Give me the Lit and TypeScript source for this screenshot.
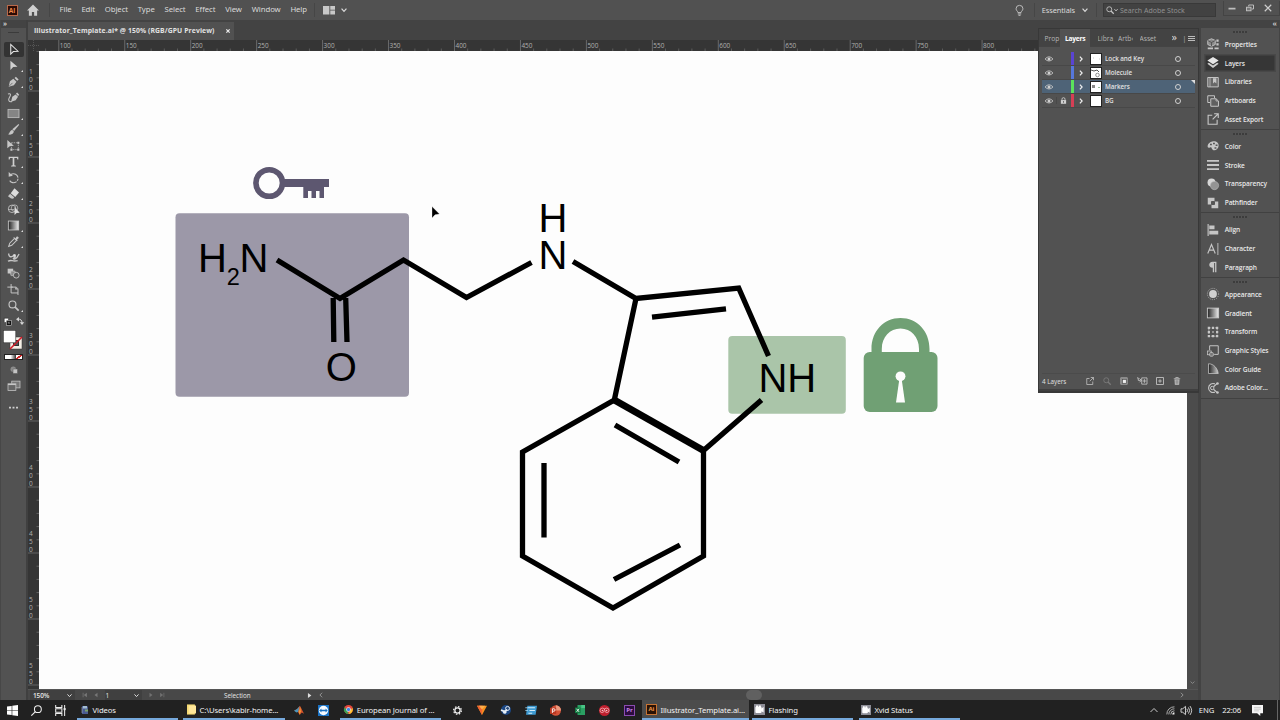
import { LitElement, html, css, svg, TemplateResult } from "lit";
import { customElement, property } from "lit/decorators.js";
import { classMap } from "lit/directives/class-map.js";

const g = "#c6c6c6";

/* Icon artwork, each drawn in a 16 x 16 box */
const ICONS: Record<string, TemplateResult> = {
  select: svg`<path d="M4 .5v14.200l3.800-3.700 6.700-.5z" fill="none" stroke="#e8e8e8" stroke-width="1.500"/>`,
  direct: svg`<path d="M3.500 1v13.500l4-4.200 6.300-.5z" fill="#d0d0d0"/>`,
  pen: svg`<path d="M1 15.500l1.800-8 5-3.600 4.500 4.500-3.700 5z" fill="${g}"/><path d="M9.500 3l2-2 4 4-2 2z" fill="${g}"/><path d="M2 14.500l4.500-4.500" stroke="#505050"/>`,
  curve: svg`<path d="M4.500 14l1.800-7 4.700-3.500 3.600 3.500-3.400 5z" fill="${g}"/><path d="M11.500 2.500l1.800-1.800 3 3.300-1.700 1.800z" fill="${g}"/><path d="M0 3c5-2 4 2 2 5S1 15.500 6 14" fill="none" stroke="${g}" stroke-width="1.500"/>`,
  rect: svg`<rect x="0" y="2" width="16" height="12" fill="#858585" stroke="#bdbdbd" stroke-width="1.200"/>`,
  brush: svg`<path d="M15.300 0l1 1-7.500 9-2.500-2.200z" fill="${g}"/><path d="M6 8.500l2.500 2.500C8 14.500 4.500 16.500 0 15 2.500 14 2.500 10 6 8.500z" fill="${g}"/>`,
  freet: svg`<path d="M-1 0v12l3.500-3 6-.5z" fill="${g}"/><rect x="5" y="4" width="10" height="10" fill="none" stroke="${g}" stroke-dasharray="2 1.200"/><path d="M13.500 2.500h3v3h-3zM13.500 12.500h3v3h-3zM3.500 12.500h3v3h-3z" fill="${g}"/>`,
  type: svg`<path d="M1 1h14v4h-1.400L13 3H9.200v10.500l2.300.5v1.200h-7V14l2.300-.5V3H3l-.6 2H1z" fill="#d0d0d0"/>`,
  rotate: svg`<path d="M3.500 4.500a6.500 6.500 0 1 1-1 8" fill="none" stroke="${g}" stroke-width="1.600" stroke-dasharray="14 1.500 3 1.500"/><path d="M1 0v7l6-1.500z" fill="${g}"/>`,
  eraser: svg`<path d="M9.500 .5l6.500 6-5.500 6.500-6.500-5.500z" fill="#dcdcdc"/><path d="M3 8.500l6 5-1.500 2-3-.3L0 12z" fill="${g}"/>`,
  shape: svg`<circle cx="6" cy="7" r="5.500" fill="none" stroke="${g}" stroke-width="1.200"/><circle cx="9.500" cy="6" r="4.800" fill="none" stroke="${g}"/><path d="M9.500 4.500v11.500l3-3 4.500-.3z" fill="#ddd"/><path d="M0 8h9" stroke="${g}"/>`,
  grad: svg`<rect x=".5" y="1.500" width="15" height="13" fill="url(#gr)" stroke="#c9c9c9" stroke-width="1.200"/>`,
  drop: svg`<path d="M10.500 3.500l2.300-2.800q2.500-.7 2.800 2.200l-2.500 2.600 1 1-1.400 1.500-5.200-5.200L9 1.400z" fill="${g}"/><path d="M8.500 4.500L2.500 10.500l-1.500 4.500L5.500 13.500l6-6" fill="none" stroke="${g}" stroke-width="1.500"/>`,
  puppet: svg`<path d="M1 2c0 5 3 6 6 4s3 3 0 4M8 4c4-1 3 3 1 5s3 3 7-6M0 13.500c5-3 6 1 14-1" fill="none" stroke="${g}" stroke-width="2"/><circle cx="9" cy="5" r="1.500" fill="#ddd"/>`,
  blend: svg`<rect x="-.5" y="1" width="8" height="7" fill="${g}"/><rect x="4" y="4.500" width="6.500" height="6.500" rx="1" fill="#8a8a8a" stroke="${g}"/><circle cx="12" cy="10.500" r="4.200" fill="#555" stroke="${g}" stroke-width="1.300"/>`,
  artb: svg`<path d="M4.500 0v13H14.500M-1 4.500h8M4.500 4.500h7.500l2.500 2.500v9" fill="none" stroke="${g}" stroke-width="1.400"/><path d="M10.500 4.500v3.500h4z" fill="${g}"/>`,
  zoom: svg`<circle cx="6.500" cy="6.500" r="5" fill="none" stroke="${g}" stroke-width="1.700"/><path d="M10 10l5.500 5.500" stroke="${g}" stroke-width="2.400"/>`,
  deflt: svg`<rect x="2" y="2" width="8" height="8" fill="#fff" stroke="#222"/><rect x="7" y="7" width="7" height="7" fill="none" stroke="#111" stroke-width="3"/><rect x="6" y="6" width="9" height="9" fill="none" stroke="#ddd"/>`,
  swap: svg`<path d="M4 4.500q8-1 8 7.500" fill="none" stroke="#d4d4d4" stroke-width="2"/><path d="M6 0v9L0 4.500zM7.500 10.500h9l-4.500 5.500z" fill="#d4d4d4"/>`,
  mode: svg`<circle cx="6.500" cy="6.500" r="5.500" fill="#8b8b8b"/><rect x="6" y="6" width="9" height="9" rx="1" fill="#c4c4c4" stroke="#555"/>`,
  screen: svg`<rect x="5" y="1.500" width="11" height="9" fill="#777" stroke="${g}"/><rect x="0" y="5" width="10.500" height="9" fill="#666" stroke="${g}"/><path d="M0 6h10.500" stroke="${g}" stroke-width="1.500"/>`,
  dots: svg`<path d="M1.500 7h2.800v2.500H1.500zM6.600 7h2.800v2.500H6.600zM11.700 7h2.800v2.500h-2.800z" fill="#d0d0d0"/>`,
  home: svg`<path d="M8 .5L0 8.500h2.500V15.500H6.500v-5h3v5h4V8.500H16z" fill="#d0d0d0"/>`,
  arrange: svg`<path d="M0 2.500h8.500v11.500H0zM9.700 2.500H16v5h-6.300zM9.700 8.700H16V14h-6.300z" fill="#c8c8c8"/>`,
  chev: svg`<path d="M1.500 4.500l6.500 7 6.500-7" fill="none" stroke="#dcdcdc" stroke-width="3.200"/>`,
  chevR: svg`<path d="M5 1.500L11 8l-6 6.500" fill="none" stroke="#f0f0f0" stroke-width="3.200"/>`,
  chevL: svg`<path d="M11 2L5 8l6 6" fill="none" stroke="#a0a0a0" stroke-width="2.300"/>`,
  bulb: svg`<path d="M5.700 11C5.500 9 3 8 3 5.500a5 5 0 0 1 10 0C13 8 10.500 9 10.300 11z" fill="none" stroke="${g}" stroke-width="1.300"/><path d="M5.500 13h5M6.500 15h3" stroke="${g}" stroke-width="1.400"/>`,
  min: svg`<path d="M1 7.500h14v3.500H1z" fill="#bdbdbd"/>`,
  restore: svg`<path d="M5.500 5V2H15v8h-3.500" fill="none" stroke="#bdbdbd" stroke-width="2"/><rect x="1" y="6.500" width="9" height="7" fill="#777" stroke="#bdbdbd" stroke-width="2"/>`,
  close: svg`<path d="M1.500 1.500l13 13M14.500 1.500l-13 13" stroke="#cdcdcd" stroke-width="2.300"/>`,
  closeTab: svg`<path d="M1.500 1.500l13 13M14.500 1.500l-13 13" stroke="#f0f0f0" stroke-width="4.500"/>`,
  props: svg`<path d="M6 1l5 2.300v5.400L6 11 1 8.700V3.300z" fill="#8a8a8a" stroke="${g}" stroke-width="1.200"/><path d="M1 3.300L6 6l5-2.700M6 6v5" fill="none" stroke="#444"/><path d="M12.500 2h3v3h-3zM12.500 7h3v3h-3zM1 12.500h7V15H1zM10 12.500h5.500V15H10z" fill="${g}"/>`,
  layers: svg`<path d="M8 0l7.500 4.700L8 9.500.5 4.700z" fill="#e6e6e6"/><path d="M.5 9l2-1.300L8 11.300l5.500-3.600 2 1.300L8 14.500z" fill="#d0d0d0"/>`,
  libs: svg`<path d="M1 2h14v12.500H1z" fill="#686868" stroke="${g}" stroke-width="1.300"/><path d="M4 2v12.500" stroke="${g}"/><path d="M8 3h4.500v7L10.200 8 8 10z" fill="${g}"/>`,
  artbs: svg`<path d="M4 10H1V1h9v3" fill="none" stroke="${g}" stroke-width="1.300"/><path d="M5 5h7l3.300 3v7H5z" fill="#606060" stroke="${g}" stroke-width="1.300"/><path d="M12 5v3h3" fill="none" stroke="${g}"/>`,
  exp: svg`<path d="M7 3H1.500v12h12V9" fill="none" stroke="${g}" stroke-width="1.500"/><path d="M9.500 1H15v5.500M15 1L7.500 8.500" fill="none" stroke="${g}" stroke-width="1.500"/>`,
  color: svg`<path d="M7 2C12 1 16 4 15.500 8s-4 6.500-7 5.500S7 9 4 10 .5 9 1 7s3-4.500 6-5z" fill="${g}"/><path d="M4 5h2.500v2H4zM8 3.500h2.500v2H8zM11.500 6H14v2h-2.500zM10 9.500h2.500v2H10z" fill="#555"/>`,
  stroke: svg`<path d="M0 2.500h16M0 8h16M0 13.500h16" stroke="${g}" stroke-width="2.600"/>`,
  transp: svg`<circle cx="6" cy="6" r="5.300" fill="#d6d6d6"/><circle cx="10" cy="10" r="5.500" fill="#949494" stroke="#bbb" stroke-width=".8"/>`,
  path: svg`<path d="M1 1h9v9H1z" fill="${g}"/><path d="M6 6h9v9H6z" fill="${g}"/><path d="M6 6h4v4H6z" fill="#555" stroke="#444"/>`,
  align: svg`<path d="M1.500 0v16" stroke="${g}" stroke-width="1.500"/><path d="M3 2h7v5H3zM3 9h12v5H3z" fill="${g}"/>`,
  char: svg`<path d="M1 14L6 2l5 12M2.800 9.500h6.500" fill="none" stroke="${g}" stroke-width="1.500"/><path d="M14.500 0v16" stroke="${g}" stroke-width="1.200"/>`,
  para: svg`<path d="M12.500 1v14h-1.700V2.800H9.500V15H7.700V9C4 9 3 7 3 5s1.500-4 4.500-4z" fill="${g}"/>`,
  appear: svg`<circle cx="8" cy="8" r="7.500" fill="none" stroke="#b0b0b0" stroke-width="1.300" stroke-dasharray="1.300 1.650"/><circle cx="8" cy="8" r="5.200" fill="#d0d0d0"/>`,
  trans: svg`<rect x="2.500" y="2.500" width="11" height="11" fill="none" stroke="${g}" stroke-dasharray="2.500 1.500"/><path d="M1 1h3v3H1zM6.500 1h3v3h-3zM12 1h3v3h-3zM1 6.500h3v3H1zM12 6.500h3v3h-3zM1 12h3v3H1zM6.500 12h3v3h-3zM12 12h3v3h-3zM7 7h2v2H7z" fill="${g}"/>`,
  gstyle: svg`<path d="M3.500 7V1H15v11.500H9.500" fill="none" stroke="${g}" stroke-width="1.300"/><rect x=".7" y="8" width="5" height="5" fill="#555" stroke="${g}"/><rect x="3.500" y="10" width="5" height="5" rx="1.500" fill="#777" stroke="${g}"/>`,
  guide: svg`<path d="M2 1c7 0 12 6 13 13H2z" fill="url(#gr2)" stroke="${g}"/>`,
  acolor: svg`<path d="M10.500 2.500A6 6 0 1 0 10.500 13.500" fill="none" stroke="${g}" stroke-width="1.500"/><circle cx="7" cy="8" r="2.300" fill="none" stroke="${g}" stroke-width="1.300"/><path d="M8.700 6.300L14 1.500M8.700 9.700L14 14.500" stroke="${g}" stroke-width="1.500"/><circle cx="14" cy="2" r="1.700" fill="${g}"/><circle cx="14" cy="14" r="1.700" fill="${g}"/>`,
  eye: svg`<path d="M0 8q8-9 16 0-8 8-16 0z" fill="none" stroke="#c4c4c4" stroke-width="1.700"/><circle cx="8" cy="8" r="3" fill="#d0d0d0"/>`,
  lock: svg`<path d="M4.500 7V5a3.500 3.500 0 0 1 7 0v2" fill="none" stroke="#d0d0d0" stroke-width="1.900"/><rect x="2" y="7" width="12" height="8.500" fill="#d0d0d0"/><path d="M7.200 9h1.600v4H7.200z" fill="#444"/>`,
  mask: svg`<rect x="1.500" y="1.500" width="13" height="13" fill="#8a8a8a" stroke="#b4b4b4"/><rect x="5" y="5" width="7.500" height="7.500" fill="#eee" stroke="#444" stroke-width="1.200"/>`,
  sub: svg`<path d="M0 3h2v4h4M4 4l3 3-3 3" fill="none" stroke="${g}" stroke-width="1.400"/><path d="M7.500 3H16v10H7.500zM11.800 5v6M9 8h6" fill="none" stroke="${g}" stroke-width="1.300"/>`,
  plus: svg`<path d="M1 1h14v14H1zM8 4.500v7M4.500 8h7" fill="none" stroke="${g}" stroke-width="1.700"/>`,
  trash: svg`<path d="M1.500 3.500h13M5.500 3V1h5v2" fill="none" stroke="${g}" stroke-width="1.500"/><path d="M3 5h10l-.7 10.500H3.700z" fill="${g}"/><path d="M6 6.500v7M8 6.500v7M10 6.500v7" stroke="#555"/>`,
  first: svg`<path d="M3 2v12" stroke="#777" stroke-width="2"/><path d="M13 2v12L5 8z" fill="#777"/>`,
  prev: svg`<path d="M12 2v12L4 8z" fill="#777"/>`,
  next: svg`<path d="M4 2v12l8-6z" fill="#707070"/>`,
  last: svg`<path d="M13 2v12" stroke="#707070" stroke-width="2"/><path d="M3 2v12l8-6z" fill="#707070"/>`,
  play: svg`<path d="M3 0v16l11-8z" fill="#dedede"/>`,
  win: svg`<path d="M0 2.300l6.800-1v6.200H0zM7.700 1.200L16 0v7.500H7.700zM0 8.500h6.800v6.200L0 13.700zM7.700 8.500H16V16l-8.300-1.200z" fill="#fff"/>`,
  find: svg`<circle cx="10" cy="6" r="5" fill="none" stroke="#f0f0f0" stroke-width="1.500"/><path d="M6.500 9.500L.5 15.500" stroke="#f0f0f0" stroke-width="1.600"/>`,
  view: svg`<path d="M1 0v3.500h9V0M1 16v-3.500h9V16M1 5.500h9v5H1zM14 0v16" fill="none" stroke="#eee" stroke-width="1.500"/><path d="M12.500 4.500h3v3h-3z" fill="#eee"/>`,
  videos: svg`<path d="M2 0h10l2 2v14H2z" fill="#4b5b91"/><path d="M4 0h8v5H4z" fill="#a3bdd2"/><path d="M8 7h6v4H8z" fill="#7da469"/><path d="M1 3h2v2H1zM1 7h2v2H1zM1 11h2v2H1z" fill="#b8c5dc"/>`,
  folder: svg`<path d="M0-1h14v18H0z" fill="#f5d973"/><path d="M3 1h13v14H3z" fill="#ffe79a"/>`,
  matlab: svg`<path d="M0 9l5-2.500L9.500 1 12 6l4 8-3.500-2-3.500 4-2.500-5z" fill="#d6552d"/><path d="M0 9l5-2.500L9 2 6.500 11 4 12z" fill="#4a95ba"/><path d="M10 3l1 7-2 5-1.500-4z" fill="#f19b36"/>`,
  team: svg`<rect width="16" height="16" fill="#1973c6"/><circle cx="8" cy="8" r="6.800" fill="#f5faff"/><path d="M1.800 8L5 5v2h6V5l3.200 3L11 11V9H5v2z" fill="#1870c0"/>`,
  chrome: svg`<circle cx="8" cy="8" r="8" fill="#e4463a"/><path d="M1 4l5 6 2 6A8 8 0 0 1 1 4z" fill="#34a353"/><path d="M8 16l3-6 4-5a8 8 0 0 1-7 11z" fill="#fbc72e"/><circle cx="8" cy="8" r="4" fill="#fff"/><circle cx="8" cy="8" r="3" fill="#4285e8"/>`,
  gear: svg`<circle cx="8" cy="8" r="4.700" fill="none" stroke="#f2f2f2" stroke-width="2.200"/><circle cx="8" cy="8" r="6.900" fill="none" stroke="#f2f2f2" stroke-width="2.200" stroke-dasharray="2.710 2.710"/>`,
  tri: svg`<path d="M0 1h16L8 16z" fill="#f7931e"/><path d="M0 1h9l-1 15z" fill="#ef6230"/><path d="M3 1h10l-5 6z" fill="#ffb04d"/>`,
  steam: svg`<circle cx="8" cy="8" r="8" fill="#1b4682"/><circle cx="10.500" cy="5.500" r="3.200" fill="#284b7c" stroke="#e6eef5" stroke-width="1.500"/><path d="M0 8l6 2.500 4-3" stroke="#e6eef5" stroke-width="3" fill="none"/><circle cx="6" cy="11.500" r="2.600" fill="#e6eef5"/>`,
  blue: svg`<path d="M2 1h14l-2 13H0z" fill="#3d9ad2"/><path d="M3 4h10M5 8h8M3.500 12H9" stroke="#d4edfa" stroke-width="1.600"/><path d="M-1 4h4M-1 8h4" stroke="#9bd2ee" stroke-width="1.200"/>`,
  ppt: svg`<circle cx="8.500" cy="8" r="7.500" fill="#d35238"/><path d="M8.500.5A7.500 7.500 0 0 1 16 8H8.500z" fill="#ef9b7f"/><rect y="4" width="9" height="9" fill="#b93721"/><path d="M3.500 11.500V5.500h2.200a1.700 1.700 0 0 1 0 3.500H4" fill="none" stroke="#fff" stroke-width="1.300"/>`,
  xls: svg`<rect x="4" y="0" width="12" height="16" fill="#2a9f62"/><path d="M10 0h6v5h-6z" fill="#49c586"/><rect y="4" width="9" height="9" fill="#137a42"/><path d="M2.500 6l4 5M6.500 6l-4 5" stroke="#fff" stroke-width="1.300"/>`,
  red: svg`<circle cx="8" cy="8" r="8" fill="#bf1f2e"/><path d="M1.500 8a3.500 3.500 0 1 1 7 0 3 3 0 1 0 6 0 3.500 3.500 0 1 0-7 0 3 3 0 1 1-6 0z" fill="none" stroke="#f4b6bb" stroke-width="1.100"/><circle cx="5" cy="8" r="1.200" fill="#f4c6ca"/><circle cx="11" cy="8" r="1.200" fill="#f4c6ca"/>`,
  cam: svg`<rect width="16" height="16" fill="#8d8d96"/><rect x="2" y="4" width="9" height="9" rx="1.500" fill="#fff"/><path d="M10 7l4-2.500v8L10 10zM3 2h3v3H3zM7 2h3v3H7z" fill="#fff"/>`,
  caret: svg`<path d="M1 12l7-7 7 7" fill="none" stroke="#e6e6e6" stroke-width="1.700"/>`,
  wifi: svg`<path d="M1.500 15A13 13 0 0 1 15 1.500M5 15A10 10 0 0 1 15 5M8.500 15A6.500 6.500 0 0 1 15 8.500" fill="none" stroke="#c9c9c9" stroke-width="1.500"/><path d="M11 15a4 4 0 0 1 4-4v4z" fill="#eee"/>`,
  sound: svg`<path d="M0 5.500h2.500L6.500 2v12l-4-3.500H0z" fill="none" stroke="#eee" stroke-width="1.200"/><path d="M8.500 5.500q2 2.500 0 5M10.800 3.500q3.500 4.500 0 9M13 1.500q5 6.500 0 13" fill="none" stroke="#eee" stroke-width="1.200"/>`,
  note: svg`<path d="M0 0h16v12h-4v4l-4.500-4H0z" fill="#f5f5f5"/><path d="M3 3.500h10M3 6h10M3 8.500h7" stroke="#bdbdbd"/>`,
};

const icon = (name: string, size = 12, cls = "") => html`<svg class="ic ${cls}" width=${size} height=${size} viewBox="0 0 16 16">
  <defs>
    <linearGradient id="gr"><stop offset="0" stop-color="#222" /><stop offset="1" stop-color="#eee" /></linearGradient>
    <linearGradient id="gr2"><stop offset="0" stop-color="#222" /><stop offset="1" stop-color="#ccc" /></linearGradient>
  </defs>${ICONS[name]}</svg>`;

const base = css`
  * { box-sizing: border-box; }
  .ic { display: block; flex: none; overflow: visible; }
`;

@customElement("menu-bar")
class MenuBar extends LitElement {
  static styles = [base, css`
    :host { display: flex; height: 20px; align-items: center; background: #515151; color: #dadada; font: 8px "Noto Sans", sans-serif; flex: none; white-space: nowrap; }
    .ai { width: 11px; height: 11px; margin: 0 9px 0 6.500px; border: 1px solid #b9694a; background: #2b0b05; color: #f08a4b; font: bold 6.500px/9px "Open Sans", sans-serif; text-align: center; flex: none; }
    .sep { width: 1px; height: 14px; background: #464646; }
    .seph { margin-left: 10px; }
    .menus { display: flex; gap: 9.750px; margin: 0 7px 0 10px; font-size: 7.750px; letter-spacing: -0.070px; line-height: 17px; height: 19px; }
    .sep2 { margin-right: 8px; }
    .arr { margin-right: 6px; }
    .grow { flex: 1; }
    .bulb { margin-right: 9px; }
    .ess { margin: 0 7px 1px 7px; font-size: 7.400px; letter-spacing: -0.080px; }
    .sep3 { margin: 0 6px 0 8px; }
    .search { display: flex; align-items: center; width: 113px; height: 14px; background: #424242; border: 1px solid #393939; padding-left: 2px; color: #919191; font-size: 7px; }
    .search .c { margin: 0 2px 0 0; }
    .wins { display: flex; align-items: center; gap: 10px; height: 15px; margin: -4px 0 0 7px; padding: 0 7px 0 4px; border: 1px solid #444; border-top: 0; width: 57px; }
  `];
  render() {
    return html`
      <div class="ai">Ai</div>${icon("home", 12)}
      <div class="sep seph"></div>
      <div class="menus">${["File", "Edit", "Object", "Type", "Select", "Effect", "View", "Window", "Help"].map((m) => html`<span>${m}</span>`)}</div>
      <div class="sep sep2"></div>${icon("arrange", 12, "arr")}${icon("chev", 6)}
      <div class="grow"></div>
      ${icon("bulb", 11, "bulb")}<div class="sep"></div><span class="ess">Essentials</span>${icon("chev", 6)}
      <div class="sep sep3"></div>
      <div class="search">${icon("zoom", 8)}${icon("chev", 4, "c")}<span>Search Adobe Stock</span></div>
      <div class="wins">${icon("min", 8)}${icon("restore", 8)}${icon("close", 8)}</div>`;
  }
}

@customElement("tool-bar")
class ToolBar extends LitElement {
  static styles = [base, css`
    :host { display: flex; flex-direction: column; width: 28px; background: #525252; border-right: 2px solid #404040; border-left: 1px solid #474747; flex: none; }
    .head { height: 8px; background: #434343; color: #ccc; font: bold 7px/8px "Open Sans", sans-serif; padding-left: 2px; letter-spacing: -1px; }
    .grip { height: 14px; display: flex; justify-content: center; padding-top: 4px; }
    .grip i { width: 11px; height: 1px; background: #3b3b3b; }
    .tool { height: 16px; width: 20px; margin-left: 2.500px; display: flex; align-items: center; justify-content: center; position: relative; }
    .tool.on { background: #333; border-radius: 2px; height: 15px; }
    .tool.more::after { content: ""; position: absolute; right: 1px; bottom: 1px; border: 1px solid #ddd; border-top-color: transparent; border-left-color: transparent; }
    .mini { display: flex; justify-content: space-between; padding: 4px 2px 0 2px; height: 16px; }
    .fs { width: 20px; height: 20px; margin: 1px 0 4px 2px; }
    .strk { display: block; }
    .modes { display: flex; width: 19px; height: 6px; margin: 0 0 5px 3px; border: 0.500px solid #222; }
    .modes i { flex: 1; background: #fff; }
    .modes i:nth-child(2) { background: linear-gradient(90deg, #eee, #333); }
    .modes i:nth-child(3) { background: linear-gradient(145deg, #fff 35%, #c22 40%, #c22 60%, #fff 65%); }
    .m2 { margin-bottom: 5px; height: 10px; }
    .m3 { margin-bottom: 6px; height: 12px; }
    .m4 { height: 18px; }
  `];
  render() {
    const tools = ["select", "direct+", "pen+", "curve", "rect+", "brush+", "freet", "type+", "rotate+", "eraser+", "shape", "grad+", "drop+", "puppet", "blend", "artb", "zoom+"];
    return html`<div class="head">››</div><div class="grip"><i></i></div>
      ${tools.map((t, i) => html`<div class=${classMap({ tool: true, on: i === 0, more: t.endsWith("+") })}>${icon(t.replace("+", ""), 11)}</div>`)}
      <div class="mini">${icon("deflt", 9)}${icon("swap", 8)}</div>
      <div class="fs"><svg class="strk" width="20" height="20" viewBox="0 0 20 20">
        <rect x="7" y="7" width="12" height="12" fill="#f4efe6" stroke="#333" stroke-width=".5" /><rect x="10.500" y="10.500" width="5" height="5" fill="#555" stroke="#333" />
        <path d="M7 19L19 7" stroke="#d21c28" stroke-width="1.600" /><rect x=".3" y=".3" width="12.500" height="12.500" fill="#fff" stroke="#333" stroke-width=".6" /></svg></div>
      <div class="modes"><i></i><i></i><i></i></div>
      <div class="tool m2">${icon("mode", 8)}</div>
      <div class="tool m3">${icon("screen", 12)}</div>
      <div class="tool m4">${icon("dots", 11)}</div>`;
  }
}

@customElement("ruler-top")
class RulerTop extends LitElement {
  static styles = css`:host { display: block; height: 11px; background: #353535; } svg { display: block; } text { font: 6.400px "Open Sans", sans-serif; fill: #b0b0b0; }`;
  render() {
    const n = Array.from({ length: 90 }, (_, i) => i);
    return html`<svg width="1170" height="11" viewBox="28 40 1170 11">
      <path d="M28 45.500H39M33.500 40V51" stroke="#555" stroke-dasharray="1 1" />
      ${n.map((i) => { const x = 45.600 + i * 13.190; return svg`<path d="M${x} ${(i - 1) % 5 === 0 ? 40 : 48.500}V51" stroke="${(i - 1) % 5 === 0 ? "#777" : "#666"}" stroke-width=".8"/>`; })}
      ${Array.from({ length: 15 }, (_, i) => svg`<text x=${59.800 + i * 65.950} y="47.600">${100 + i * 50}</text>`)}
    </svg>`;
  }
}

@customElement("ruler-left")
class RulerLeft extends LitElement {
  static styles = css`:host { display: block; width: 11px; background: #353535; overflow: hidden; flex: none; } svg { display: block; } text { font: 6.500px "Open Sans", sans-serif; fill: #b0b0b0; }`;
  render() {
    return html`<svg width="11" height="638" viewBox="28 51 11 638">
      ${Array.from({ length: 49 }, (_, i) => { const y = 51.400 + i * 13.200; const M = (i - 3) % 5 === 0; return svg`<path d="M${M ? 28 : 36.500} ${y}H39" stroke="#707070" stroke-width=".8"/>`; })}
      ${Array.from({ length: 10 }, (_, i) => String(100 + i * 50).split("").map((d, k) => svg`<text x="29" y=${73.600 + i * 66 + k * 8}>${d}</text>`))}
    </svg>`;
  }
}

@customElement("art-board")
class ArtBoard extends LitElement {
  static styles = css`
    :host { display: block; background: #fdfdfd; flex: none; width: 1148px; }
    svg { display: block; }
    .atom { font: 40px "Liberation Sans", sans-serif; fill: #000; }
    .sub { font-size: 23.500px; }
    .bond { fill: none; stroke: #000; stroke-width: 5.300; }
    .wide { stroke-width: 7; }
    .key { fill: #5d5770; }
    .ring { fill: none; stroke: #5d5770; stroke-width: 5.600; }
    .green { fill: #70a074; }
  `;
  render() {
    return html`<svg width="1148" height="638" viewBox="39 51 1148 638">
      <rect x="175.500" y="213.200" width="233.500" height="183.500" rx="4" fill="#9c98a8" />
      <rect x="728.300" y="336" width="117.500" height="77.800" rx="4" fill="#aac5a9" />
      <circle class="ring" cx="269.200" cy="183" r="13.300" />
      <path class="key" d="M284 179H329V187H324V198H319.500V191H316V198H311.500V191H308V198H303.300V187H284z" />
      <path class="green" d="M871.500 353V349C871.500 331 884 318 900.500 318S929.500 331 929.500 349V353H919V349C919 337 911 328.600 900.500 328.600S881.800 337 881.800 349V353z" />
      <rect class="green" x="863.700" y="352" width="73.800" height="60" rx="6" />
      <circle cx="900.500" cy="376.300" r="4.900" fill="#fdfdfd" /><path d="M899.500 378h2L905 402.600H896z" fill="#fdfdfd" />
      <path class="bond" d="M277 260L340 298.500L403.500 260L466.500 297.500L531.500 262.500M573 261.500L636 298.500L738.700 288L768.500 356M652 317.200L726 308.800M636 298.500L614.300 400L522.500 452V556L613 608L703.500 556V450.500L761.500 400M544 463V537.500M615 425L679 462M614 579.500L680 545M333.200 298L333.800 342M345.700 298L347 342" />
      <path class="bond wide" d="M614.300 400L703.500 450.500" />
      <text class="atom" x="198" y="272.400">H</text><text class="atom sub" x="226.800" y="285.200">2</text><text class="atom" x="239.600" y="272.400">N</text>
      <text class="atom" x="325.800" y="380.600">O</text>
      <text class="atom" x="538.500" y="231.700">H</text><text class="atom" x="538.500" y="269.100">N</text>
      <text class="atom" x="758.400" y="391.700">NH</text>
      <path d="M432 206.500V218l3-3.200 4.500-.8z" fill="#000" stroke="#fff" stroke-width=".3" />
    </svg>`;
  }
}

@customElement("layers-panel")
class LayersPanel extends LitElement {
  static styles = [base, css`
    :host { display: flex; flex-direction: column; width: 161px; height: 365px; background: #525252; border: 1px solid #383838; border-bottom-width: 2px; color: #e0e0e0; font: 600 6.300px "Open Sans", sans-serif; white-space: nowrap; }
    .tabs { display: flex; height: 18px; background: #434343; line-height: 19px; color: #b5b5b5; font-size: 6.700px; font-weight: 400; border-bottom: 1px solid #444; }
    .tabs span { overflow: hidden; height: 18px; }
    .tabs .t0 { width: 22px; padding-left: 5.500px; }
    .tabs .t1 { width: 30px; padding-left: 5px; background: #525252; color: #fff; font-weight: 700; margin: 0 7.500px 0 -1px; letter-spacing: -0.250px; }
    .tabs .t2 { width: 18.500px; margin-right: 2px; } .tabs .t3 { width: 15px; margin-right: 6.500px; } .tabs .t4 { width: 24px; }
    .tabs .tt { font-size: 11px; line-height: 16px; margin-left: 8px; width: 11px; color: #ddd; }
    .tabs .pipe { width: 5px; font-size: 7px; }
    .ham { width: 7px; height: 5px; margin-top: 7px; border: solid #bbb; border-width: 1px 0; background: linear-gradient(#bbb, #bbb) 0 1px / 100% 1px no-repeat; }
    .list { margin: 5px 3px 0 3px; flex: 1; border: solid #4b4b4b; border-width: 0 0 1px; }
    .row { display: flex; align-items: center; height: 14px; border-bottom: 1px solid #484848; position: relative; }
    .row.sel { background: #4e6377; }
    .row.sel::after { content: ""; position: absolute; right: 0; top: 0; border: 2px solid transparent; border-top-color: #ddd; border-right-color: #ddd; }
    .e { width: 14px; display: flex; justify-content: center; } .k { width: 15px; display: flex; justify-content: flex-start; padding-left: 3px; border-left: 1px solid #484848; }
    .bar { width: 3px; height: 13px; margin-right: 3.500px; }
    .th { width: 12px; height: 12px; background: #fff; border: 1px solid #222; margin: 0 3px 0 6.500px; display: block; }
    .nm { flex: 1; letter-spacing: -0.070px; } .circ { width: 6px; height: 6px; border: 1px solid #d0d0d0; border-radius: 50%; margin-right: 14px; }
    .foot { height: 14px; display: flex; align-items: center; padding-left: 3px; font-size: 6.300px; font-weight: 400; margin-bottom: 1px; }
    .foot span { width: 43.500px; } .foot .ic { margin-right: 9.100px; } .foot .dim { opacity: 0.350; }
    .edge { height: 2px; background: #404040; }
  `];
  render() {
    const rows: [string, string, TemplateResult][] = [
      ["Lock and Key", "#5a44d2", svg`<path d="M2 4h1M8 5h1" stroke="#ccc" />`],
      ["Molecule", "#5677dc", svg`<path d="M0 2l3 1 3-1 2 2" stroke="#555" fill="none"/><circle cx="6.500" cy="7" r="1.800" fill="none" stroke="#777" stroke-width=".8"/>`],
      ["Markers", "#5be45c", svg`<path d="M1 3h3v3H1z" fill="#888"/><path d="M7 5h2v1H7z" fill="#9b9"/>`],
      ["BG", "#d63f55", svg``]];
    return html`<div class="tabs"><span class="t0">Prop</span><span class="t1">Layers</span><span class="t2">Libra</span><span class="t3">Artb‹</span><span class="t4">Asset</span><span class="tt">»</span><span class="pipe">|</span><i class="ham"></i></div>
      <div class="list">${rows.map(([n, c, t], i) => html`<div class=${classMap({ row: true, sel: i === 2 })}>
        <div class="e">${icon("eye", 8)}</div><div class="k">${i === 3 ? icon("lock", 7) : ""}</div><div class="bar" style="background:${c}"></div>${icon("chevR", 6)}
        <svg class="th" viewBox="0 0 10 10">${t}</svg><div class="nm">${n}</div><div class="circ"></div></div>`)}</div>
      <div class="foot"><span>4 Layers</span>${icon("exp", 8)}${icon("zoom", 8, "dim")}${icon("mask", 8)}${icon("sub", 10)}${icon("plus", 8)}${icon("trash", 8)}</div>
      <div class="edge"></div>`;
  }
}

@customElement("side-dock")
class SideDock extends LitElement {
  static styles = [base, css`
    :host { display: flex; flex-direction: column; width: 82px; background: #525252; border-left: 3px solid #434343; border-right: 1px solid #444; color: #e8e8e8; font: 600 6.600px "Open Sans", sans-serif; flex: none; white-space: nowrap; }
    .head { height: 8px; background: #434343; color: #ccc; font: bold 7px/7px "Open Sans", sans-serif; text-align: right; padding-right: 3px; letter-spacing: -0.800px; }
    .grp { padding: 7.100px 3px 0.500px; border-bottom: 1px solid #414141; }
    .grp::before { content: ""; display: block; height: 1.500px; width: 14px; margin: -4px auto 2.500px; background: repeating-linear-gradient(90deg, #3c3c3c 0 2px, #555 2px 3px); }
    .it { display: flex; align-items: center; height: 18.700px; gap: 5.700px; padding-left: 3px; letter-spacing: -0.100px; }
    .it.on { background: #363636; box-shadow: inset 0 0 0 1.500px #484848; }
  `];
  render() {
    const groups = [
      [["props", "Properties"], ["layers", "Layers"], ["libs", "Libraries"], ["artbs", "Artboards"], ["exp", "Asset Export"]],
      [["color", "Color"], ["stroke", "Stroke"], ["transp", "Transparency"], ["path", "Pathfinder"]],
      [["align", "Align"], ["char", "Character"], ["para", "Paragraph"]],
      [["appear", "Appearance"], ["grad", "Gradient"], ["trans", "Transform"], ["gstyle", "Graphic Styles"], ["guide", "Color Guide"], ["acolor", "Adobe Color..."]]];
    return html`<div class="head">‹‹</div>${groups.map((gr) => html`<div class="grp">${gr.map(([i, n]) => html`<div class=${classMap({ it: true, on: n === "Layers" })}>${icon(i, 12)}<span>${n}</span></div>`)}</div>`)}`;
  }
}

@customElement("task-bar")
class TaskBar extends LitElement {
  static styles = [base, css`
    :host { display: flex; height: 20px; background: #212121; color: #f2f2f2; font: 7.700px "Noto Sans", sans-serif; flex: none; white-space: nowrap; }
    .start { display: flex; width: 72px; }
    .b { display: flex; align-items: center; justify-content: center; width: 24.650px; flex: none; }
    .start .b { width: 24px; }
    .app { display: flex; align-items: center; flex: none; border-bottom: 2px solid #76a9dc; gap: 3.500px; padding-left: 4px; padding-top: 1px; letter-spacing: -0.100px; }
    .app.on { background: #4c4c4c; }
    .app.near { padding-left: 2px; }
    .gap1 { width: 1.500px; } .gap4 { width: 3.500px; }
    .sq { width: 11px; height: 11px; font: 700 6px/9px "Open Sans", sans-serif; text-align: center; flex: none; }
    .ai { border: 1px solid #c77434; background: #2a1205; color: #f29a4a; } .pr { border: 1px solid #8a4bb0; background: #2d0b40; color: #c98ae8; }
    .grow { flex: 1; } .lang { margin: 0 8px 0 7px; line-height: 20px; } .clock { line-height: 20px; margin-right: 11px; letter-spacing: -0.200px; }
    .tray { align-self: center; margin-right: 8px; } .tray.w { margin-right: 6px; } .tray.s { margin-right: 0; } .tray.n { margin: 0; }
    .end { width: 1px; background: #666; margin: 0 2px 0 14px; }
  `];
  render() {
    const app = (ic: TemplateResult, t: string, w: number, ml: number, cls = "") => html`<div class="app ${cls}" style="width:${w}px;margin-left:${ml}px">${ic}<span>${t}</span></div>`;
    const b = (n: string, s = 11) => html`<div class="b">${icon(n, s)}</div>`;
    return html`<div class="start">${b("win", 11)}${b("find", 11)}${b("view", 11)}</div>
      ${app(icon("videos", 8), "Videos", 101, 5)}
      ${app(icon("folder", 9), "C:\\Users\\kabir-home...", 102, 5)}
      <div class="gap1"></div>${b("matlab", 10)}${b("team", 11)}
      ${app(icon("chrome", 9), "European Journal of ...", 101, 4.500)}
      <div class="gap4"></div>${b("gear", 9)}${b("tri", 10)}${b("steam", 10)}${b("blue", 11)}${b("ppt", 11)}${b("xls", 10)}${b("red", 11)}
      <div class="b"><div class="sq pr">Pr</div></div>
      ${app(html`<div class="sq ai">Ai</div>`, "Illustrator_Template.ai...", 107, 0, "on")}
      ${app(icon("cam", 11), "Flashing", 101, 3, "near")}
      ${app(icon("cam", 10), "Xvid Status", 101, 6, "near")}
      <div class="grow"></div>
      ${icon("caret", 8, "tray")}${icon("wifi", 9, "tray w")}${icon("sound", 11, "tray s")}
      <span class="lang">ENG</span><span class="clock">22:06</span>${icon("note", 11, "tray n")}<div class="end"></div>`;
  }
}

@customElement("app-root")
class AppRoot extends LitElement {
  @property() zoom = "150%";
  static styles = [base, css`
    :host { display: flex; flex-direction: column; width: 1280px; height: 720px; overflow: hidden; background: #434343; }
    .body { display: flex; height: 680px; }
    .doc { display: flex; flex-direction: column; width: 1170px; position: relative; }
    .tabs { height: 20px; padding-top: 2px; display: flex; background: #434343; }
    .tab { width: 206px; height: 18px; background: #515151; display: flex; align-items: center; color: #e2e2e2; font: 700 6.800px "Open Sans", sans-serif; padding: 0 4px 1px 6px; justify-content: space-between; white-space: nowrap; letter-spacing: 0.110px; }
    .stage { display: flex; height: 638px; }
    .vs { width: 11px; background: #4c4c4c; display: flex; align-items: flex-end; justify-content: center; padding-bottom: 4px; }
    .down { transform: rotate(-90deg); }
    .status { height: 11px; display: flex; align-items: center; background: #484848; color: #e6e6e6; font: 6.500px "Open Sans", sans-serif; border-top: 1px solid #555; }
    .field { display: flex; align-items: center; height: 10px; background: #404040; flex: none; }
    .z { width: 44.500px; padding-left: 3px; font-weight: 600; letter-spacing: -0.100px; justify-content: space-between; padding-right: 2.500px; margin-left: 2px; }
    .nav { display: flex; gap: 5px; margin: 0 8px 0 7.500px; width: 18px; }
    .pg { width: 37px; justify-content: space-between; padding: 0 3px 0 1px; margin-left: -3.500px; }
    .nav2 { margin: 0 0 0 6.500px; } .sel { margin-left: 58px; width: 83px; font-size: 6.300px; }
    .hs { flex: 1; margin-left: 6px; display: flex; align-items: center; justify-content: space-between; padding-right: 13px; }
    .thumb { width: 16px; height: 10px; border-radius: 5px; background: #606060; margin-left: 5px; }
    .right { transform: scaleX(-1); }
    .float { position: absolute; left: 1010px; top: 8px; }
  `];
  render() {
    return html`<menu-bar></menu-bar>
      <div class="body"><tool-bar></tool-bar>
        <div class="doc">
          <div class="tabs"><div class="tab"><span>Illustrator_Template.ai* @ ${this.zoom} (RGB/GPU Preview)</span>${icon("closeTab", 4)}</div></div>
          <ruler-top></ruler-top>
          <div class="stage"><ruler-left></ruler-left><art-board></art-board><div class="vs">${icon("chevL", 5, "down")}</div></div>
          <div class="status"><div class="field z"><span>${this.zoom}</span>${icon("chev", 5)}</div><div class="nav">${icon("first", 6)}${icon("prev", 6)}</div><div class="field pg"><span>1</span>${icon("chev", 5)}</div>
            <div class="nav nav2">${icon("next", 6)}${icon("last", 6)}</div><span class="sel">Selection</span>${icon("play", 5)}
            <div class="hs">${icon("chevL", 6)}<i class="thumb"></i>${icon("chevL", 6, "right")}</div></div>
          <layers-panel class="float"></layers-panel>
        </div>
        <side-dock></side-dock></div>
      <task-bar></task-bar>`;
  }
}
